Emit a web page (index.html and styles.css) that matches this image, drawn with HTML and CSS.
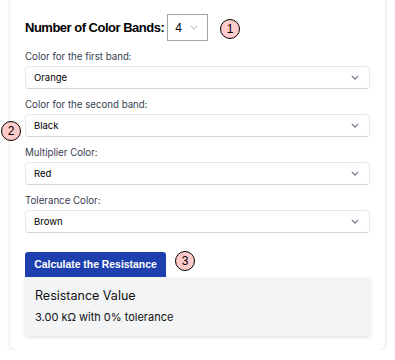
FILE: index.html
```html
<!DOCTYPE html>
<html>
<head>
<meta charset="utf-8">
<link rel="stylesheet" href="styles.css">
</head>
<body>
<div class="card">
  <div class="title-row">
    <h1 class="title">Number of Color Bands:</h1>
    <div class="num-select">4 <svg class="chev-sm" viewBox="0 0 10 6" width="8" height="5"><path d="M1 1l4 4 4-4" fill="none" stroke="#999" stroke-width="1"/></svg></div>
    <span class="marker m1">1</span>
  </div>
  <div class="group">
    <label class="label">Color for the first band:</label>
    <div class="select">Orange<svg class="chev" viewBox="0 0 10 6" width="8" height="5"><path d="M1 1l4 4 4-4" fill="none" stroke="#6b7280" stroke-width="1.4"/></svg></div>
  </div>
  <div class="group">
    <label class="label">Color for the second band:</label>
    <div class="select">Black<svg class="chev" viewBox="0 0 10 6" width="8" height="5"><path d="M1 1l4 4 4-4" fill="none" stroke="#6b7280" stroke-width="1.4"/></svg></div>
    <span class="marker m2">2</span>
  </div>
  <div class="group">
    <label class="label">Multiplier Color:</label>
    <div class="select">Red<svg class="chev" viewBox="0 0 10 6" width="8" height="5"><path d="M1 1l4 4 4-4" fill="none" stroke="#6b7280" stroke-width="1.4"/></svg></div>
  </div>
  <div class="group">
    <label class="label">Tolerance Color:</label>
    <div class="select">Brown<svg class="chev" viewBox="0 0 10 6" width="8" height="5"><path d="M1 1l4 4 4-4" fill="none" stroke="#6b7280" stroke-width="1.4"/></svg></div>
  </div>
  <div class="btn-row">
    <button class="btn">Calculate the Resistance</button>
    <span class="marker m3">3</span>
  </div>
  <div class="result">
    <div class="result-title">Resistance Value</div>
    <div class="result-text">3.00 kΩ with 0% tolerance</div>
  </div>
</div>
</body>
</html>
```
FILE: styles.css
```css
* { box-sizing: border-box; }
html, body { margin: 0; padding: 0; background: #fff; }
body { font-family: Inter, "Liberation Sans", sans-serif; }
.card {
  position: relative;
  margin: -10px 10px 0 10px;
  width: 375px;
  padding: 24px 15px 14px 15px;
  background: #fff;
  border-radius: 0 0 6px 6px;
  box-shadow: 0 1px 4px rgba(0,0,0,0.12), 0 0 1px rgba(0,0,0,0.08);
  display: flex;
  flex-direction: column;
}
.title-row {
  position: relative;
  display: flex;
  align-items: center;
  height: 27px;
  margin-bottom: 9px;
}
.title {
  margin: 0 3px 0 0;
  font-family: "Liberation Sans", Arial, sans-serif;
  font-weight: bold;
  font-size: 13px;
  letter-spacing: -0.5px;
  color: #000;
}
.num-select {
  width: 41px;
  height: 27px;
  border: 1px solid #a3a3a3;
  display: flex;
  align-items: center;
  padding-left: 7px;
  gap: 8px;
  font-family: "Liberation Sans", Arial, sans-serif;
  font-size: 12px;
  color: #000;
}
.group {
  position: relative;
  display: flex;
  flex-direction: column;
  margin-bottom: 9px;
}
.label {
  font-size: 9.7px;
  line-height: 14px;
  color: #374151;
  margin-bottom: 2px;
}
.select {
  height: 23px;
  border: 1px solid #e8e8ea;
  border-bottom-color: #d4d4d8;
  border-radius: 4px;
  background: #fff;
  display: flex;
  align-items: center;
  justify-content: space-between;
  padding: 0 10px 0 8px;
  font-size: 9.5px;
  color: #000;
}
.btn-row {
  position: relative;
  display: flex;
  align-items: flex-start;
  margin-top: 10px;
}
.btn {
  width: 141px;
  height: 25px;
  border: none;
  border-radius: 3px 3px 0 0;
  background: #1e40af;
  color: #fff;
  font-family: "Liberation Sans", Arial, sans-serif;
  font-weight: bold;
  font-size: 10.4px;
  padding: 0;
}
.result {
  width: 347px;
  margin-left: -1px;
  height: 59px;
  background: #f3f4f6;
  border-radius: 0 0 6px 6px;
  box-shadow: 0 2px 3px rgba(0,0,0,0.1);
  padding: 11px 11px;
}
.result-title {
  font-size: 12.5px;
  line-height: 16px;
  color: #111;
  margin-bottom: 6px;
}
.result-text {
  font-size: 11px;
  line-height: 14px;
  color: #111;
}
.marker {
  position: absolute;
  width: 20px;
  height: 20px;
  border-radius: 50%;
  background: #fecaca;
  border: 1px solid #000;
  display: flex;
  align-items: center;
  justify-content: center;
  font-family: "Liberation Sans", Arial, sans-serif;
  font-size: 12px;
  color: #000;
}
.m1 { left: 195px; top: 5px; }
.m2 { left: -24px; top: 23px; }
.m3 { left: 150px; top: -1px; }
```
